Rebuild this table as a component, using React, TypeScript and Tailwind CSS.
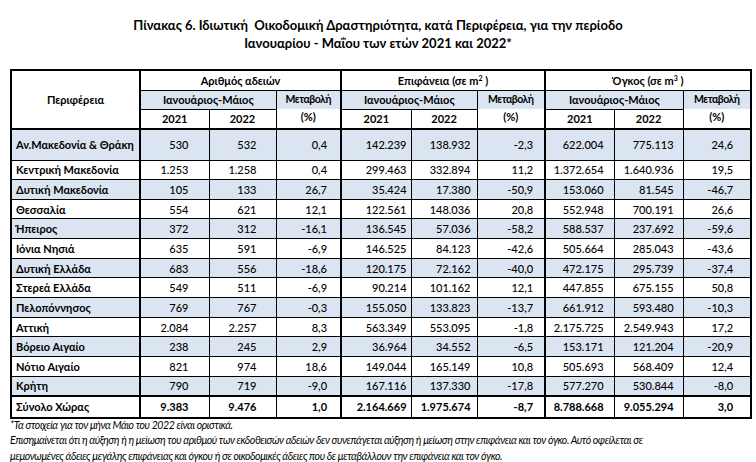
import React from 'react';

type Row = string[];

const rows: Row[] = [
  ['Αν.Μακεδονία & Θράκη', '530', '532', '0,4', '142.239', '138.932', '-2,3', '622.004', '775.113', '24,6'],
  ['Κεντρική Μακεδονία', '1.253', '1.258', '0,4', '299.463', '332.894', '11,2', '1.372.654', '1.640.936', '19,5'],
  ['Δυτική Μακεδονία', '105', '133', '26,7', '35.424', '17.380', '-50,9', '153.060', '81.545', '-46,7'],
  ['Θεσσαλία', '554', '621', '12,1', '122.561', '148.036', '20,8', '552.948', '700.191', '26,6'],
  ['Ήπειρος', '372', '312', '-16,1', '136.545', '57.036', '-58,2', '588.537', '237.692', '-59,6'],
  ['Ιόνια Νησιά', '635', '591', '-6,9', '146.525', '84.123', '-42,6', '505.664', '285.043', '-43,6'],
  ['Δυτική Ελλάδα', '683', '556', '-18,6', '120.175', '72.162', '-40,0', '472.175', '295.739', '-37,4'],
  ['Στερεά Ελλάδα', '549', '511', '-6,9', '90.214', '101.162', '12,1', '447.855', '675.155', '50,8'],
  ['Πελοπόννησος', '769', '767', '-0,3', '155.050', '133.823', '-13,7', '661.912', '593.480', '-10,3'],
  ['Αττική', '2.084', '2.257', '8,3', '563.349', '553.095', '-1,8', '2.175.725', '2.549.943', '17,2'],
  ['Βόρειο Αιγαίο', '238', '245', '2,9', '36.964', '34.552', '-6,5', '153.171', '121.204', '-20,9'],
  ['Νότιο Αιγαίο', '821', '974', '18,6', '149.044', '165.149', '10,8', '505.693', '568.409', '12,4'],
  ['Κρήτη', '790', '719', '-9,0', '167.116', '137.330', '-17,8', '577.270', '530.844', '-8,0'],
];

const total: Row = ['Σύνολο Χώρας', '9.383', '9.476', '1,0', '2.164.669', '1.975.674', '-8,7', '8.788.668', '9.055.294', '3,0'];

// right padding of the number columns, taken from the scan
const padR = ['pr-[20px]', 'pr-[19px]', 'pr-[13px]', 'pr-[4px]', 'pr-[6px]', 'pr-[11px]', 'pr-[10px]', 'pr-[9px]', 'pr-[17px]'];
const colW = ['w-[129px]', 'w-[69px]', 'w-[67px]', 'w-[65px]', 'w-[70px]', 'w-[66px]', 'w-[68px]', 'w-[69px]', 'w-[69px]', 'w-[68px]'];

const groupStart = (i: number) => i === 1 || i === 4 || i === 7;

const DataRow: React.FC<{ row: Row; shaded: boolean; tall?: boolean; bold?: boolean }> = ({ row, shaded, tall, bold }) => (
  <tr className={`${tall ? 'h-[31px]' : bold ? 'h-[22px] border-t-2 border-black' : 'h-[19.67px]'} ${shaded ? 'bg-[#dbe5f1]' : 'bg-white'}`}>
    {row.map((v, i) =>
      i === 0 ? (
        <td key={i} className="border border-black pl-[4px] text-left font-bold whitespace-nowrap">
          {v}
        </td>
      ) : (
        <td
          key={i}
          className={`border border-black text-right whitespace-nowrap ${padR[i - 1]} ${groupStart(i) ? 'border-l-2' : ''} ${bold ? 'font-bold' : 'font-medium'}`}
        >
          {v}
        </td>
      )
    )}
  </tr>
);

const Change = () => (
  <th className="border border-black border-b-0 bg-[#dbe5f1] font-bold text-[10.5px] tracking-[-0.5px] whitespace-nowrap px-0">Μεταβολή</th>
);

const Pct = () => <th className="border border-black border-t-0 border-b-2 font-bold align-top pt-[1px]">(%)</th>;

export default function App() {
  return (
    <div className="w-[756px] h-[462px] bg-white text-black font-['Lato','Noto_Sans',sans-serif] overflow-hidden">
      {/* Title */}
      <div className="pt-[16px] text-center font-bold text-[13px] leading-[18px]">
        <div className="whitespace-pre">Πίνακας 6. Ιδιωτική  Οικοδομική Δραστηριότητα, κατά Περιφέρεια, για την περίοδο</div>
        <div>Ιανουαρίου - Μαΐου των ετών 2021 και 2022*</div>
      </div>

      <div className="pl-[10px] pt-[17px]">
        <table className="table-fixed border-collapse border-2 border-black w-[740px] text-[11px] leading-[13px]">
          <colgroup>
            {colW.map((w, i) => (
              <col key={i} className={w} />
            ))}
          </colgroup>
          <thead className="font-bold">
            <tr className="h-[20px]">
              <th rowSpan={3} className="border border-black border-b-2 font-bold">
                Περιφέρεια
              </th>
              <th colSpan={3} className="border border-black border-l-2 font-bold">
                Αριθμός αδειών
              </th>
              <th colSpan={3} className="border border-black border-l-2 font-bold">
                Επιφάνεια (σε m<sup className="text-[7px]">2</sup> )
              </th>
              <th colSpan={3} className="border border-black border-l-2 font-bold">
                Όγκος (σε m<sup className="text-[7px]">3</sup> )
              </th>
            </tr>
            <tr className="h-[19px]">
              <th colSpan={2} className="border border-black border-l-2 bg-[#dbe5f1] font-bold">
                Ιανουάριος-Μάιος
              </th>
              <Change />
              <th colSpan={2} className="border border-black border-l-2 bg-[#dbe5f1] font-bold">
                Ιανουάριος-Μάιος
              </th>
              <Change />
              <th colSpan={2} className="border border-black border-l-2 bg-[#dbe5f1] font-bold">
                Ιανουάριος-Μάιος
              </th>
              <Change />
            </tr>
            <tr className="h-[20px]">
              <th className="border border-black border-l-2 border-b-2 font-bold">2021</th>
              <th className="border border-black border-b-2 font-bold">2022</th>
              <Pct />
              <th className="border border-black border-l-2 border-b-2 font-bold">2021</th>
              <th className="border border-black border-b-2 font-bold">2022</th>
              <Pct />
              <th className="border border-black border-l-2 border-b-2 font-bold">2021</th>
              <th className="border border-black border-b-2 font-bold">2022</th>
              <Pct />
            </tr>
          </thead>
          <tbody>
            {rows.map((r, i) => (
              <DataRow key={r[0]} row={r} shaded={i % 2 === 0} tall={i === 0} />
            ))}
            <DataRow row={total} shaded={false} bold />
          </tbody>
        </table>
      </div>

      {/* Notes */}
      <div className="pl-[10px] -mt-[1px] italic text-[10.5px] tracking-[-0.4px] leading-[15.5px] whitespace-nowrap">
        <div>*Τα στοιχεία για τον μήνα Μάιο του 2022 είναι οριστικά.</div>
        <div>
          Επισημαίνεται ότι η αύξηση ή η μείωση του αριθμού των εκδοθεισών αδειών δεν συνεπάγεται αύξηση ή μείωση στην επιφάνεια και τον όγκο. Αυτό οφείλεται σε
        </div>
        <div>μεμονωμένες άδειες μεγάλης επιφάνειας και όγκου ή σε οικοδομικές άδειες που δε μεταβάλλουν την επιφάνεια και τον όγκο.</div>
      </div>
    </div>
  );
}
